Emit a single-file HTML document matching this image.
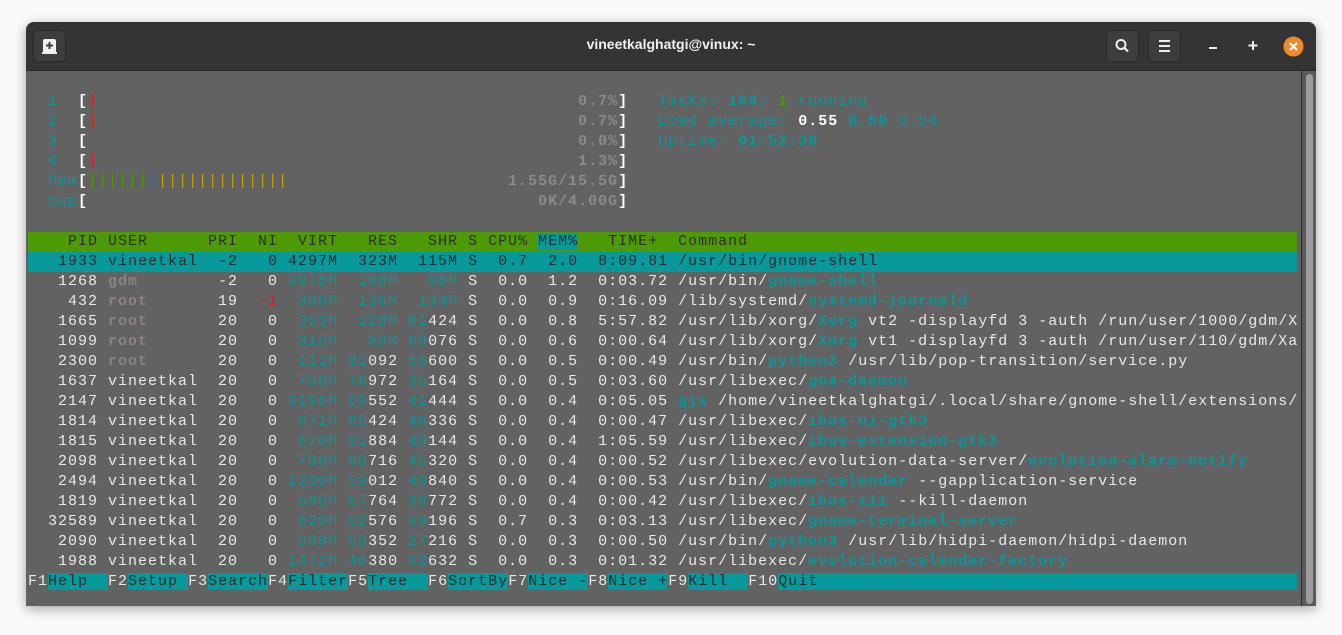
<!DOCTYPE html>
<html><head><meta charset="utf-8"><style>
html,body{margin:0;padding:0;width:1342px;height:635px;background:#fafafa;overflow:hidden;position:relative}
.win{position:absolute;left:26px;top:22px;width:1290px;height:584px;background:#626262;border-radius:8px 8px 0 0;box-shadow:0 3px 12px rgba(0,0,0,.35);overflow:hidden}
.tb{position:absolute;left:0;top:0;width:1290px;height:48px;background:#343434;border-bottom:1px solid #262626}
.title{position:absolute;left:0;width:100%;top:14px;text-align:center;color:#f0f0f0;font:bold 14px "Liberation Sans",sans-serif}
.btn{position:absolute;top:8px;width:33px;height:32px;background:#3d3d3d;border:1px solid #2a2a2a;border-radius:5px;box-sizing:border-box}
.term{position:absolute;left:2px;top:70px;width:1269px;height:500px;overflow:hidden;font:15px/20px "Liberation Mono",monospace;letter-spacing:1px;color:#e8e8e8;white-space:normal}
.term div{height:20px;white-space:pre}
.c{color:#06989a}.cb{color:#06989a;font-weight:bold}.u{color:#8a8280;font-weight:bold}.r{color:#e01b1b}
.w{color:#fff;font-weight:bold}.gr{color:#8e8886;font-weight:bold}.g{color:#4e9a06}.y{color:#c4a000}.bl{color:#3465a4}
.hdr{background:#4e9a06;color:#2e2e2e}.sel{background:#06989a;color:#2e2e2e}
.ft{background:#06989a;color:#2e2e2e}
</style></head><body>
<div class="win">
<div class="tb">
 <div class="btn" style="left:7px"><svg width="31" height="30" viewBox="0 0 31 30"><path d="M9 21V10a2 2 0 0 1 2-2h9a2 2 0 0 1 2 2v11z" fill="#eee"/><path d="M15.5 11v7M12 14.5h7" stroke="#3d3d3d" stroke-width="2"/><rect x="8" y="21" width="15" height="2" fill="#eee"/></svg></div>
 <div class="title">vineetkalghatgi@vinux: ~</div>
 <div class="btn" style="left:1080px"><svg width="31" height="30" viewBox="0 0 31 30"><circle cx="14" cy="13.5" r="4.5" fill="none" stroke="#eee" stroke-width="2"/><path d="M17.5 17l3.5 3.5" stroke="#eee" stroke-width="2.2"/></svg></div>
 <div class="btn" style="left:1122px"><svg width="31" height="30" viewBox="0 0 31 30"><path d="M10 10h11M10 15h11M10 20h11" stroke="#eee" stroke-width="2"/></svg></div>
 <svg style="position:absolute;left:1180px;top:14px" width="20" height="20"><path d="M3 12h8" stroke="#eee" stroke-width="2"/></svg>
 <svg style="position:absolute;left:1218px;top:14px" width="20" height="20"><path d="M9 5v9M4.5 9.5h9" stroke="#eee" stroke-width="2"/></svg>
 <svg style="position:absolute;left:1257px;top:14px" width="21" height="21"><circle cx="10.5" cy="10.5" r="10" fill="#f0892a"/><path d="M7 7l7 7M14 7l-7 7" stroke="#fff" stroke-width="2"/></svg>
</div>
<div style="position:absolute;left:1275px;top:49px;width:15px;height:535px;background:#5a5a5a;border-left:1px solid #2d2d2d"></div>
<div style="position:absolute;left:1280px;top:52px;width:7px;height:530px;background:#9c9c9c;border-radius:4px"></div>
<div class="term"><div>  <span class="c">1</span>  <span class="w">[</span><span class="r">|</span>                                                <span class="gr">0.7%</span><span class="w">]</span>   <span class="c">Tasks: </span><span class="cb">166</span><span class="c">; </span><span class="g" style="font-weight:bold">1</span><span class="c"> running</span></div><div>  <span class="c">2</span>  <span class="w">[</span><span class="r">|</span>                                                <span class="gr">0.7%</span><span class="w">]</span>   <span class="c">Load average: </span><span class="w">0.55 </span><span class="cb">0.50 </span><span class="c">0.54</span></div><div>  <span class="c">3</span>  <span class="w">[</span>                                                 <span class="gr">0.0%</span><span class="w">]</span>   <span class="c">Uptime: </span><span class="cb">01:52:30</span></div><div>  <span class="c">4</span>  <span class="w">[</span><span class="r">|</span>                                                <span class="gr">1.3%</span><span class="w">]</span></div><div>  <span class="c">Mem</span><span class="w">[</span><span class="g">||||||</span><span class="bl">|</span><span class="y">|||||||||||||</span>                      <span class="gr">1.55G/15.5G</span><span class="w">]</span></div><div>  <span class="c">Swp</span><span class="w">[</span>                                             <span class="gr">0K/4.00G</span><span class="w">]</span></div><div></div><div class="hdr">    PID USER      PRI  NI  VIRT   RES   SHR S CPU% <span class="sel">MEM%</span>   TIME+  Command                                                                                     </div><div class="sel">   1933 vineetkal  -2   0 4297M  323M  115M S  0.7  2.0  8:09.81 /usr/bin/gnome-shell                                                                     </div><div>   1268 <span class="u">gdm      </span>  -2   0 <span class="c">3978M  188M   98M</span> S  0.0  1.2  0:03.72 /usr/bin/<span class="cb">gnome-shell</span></div><div>    432 <span class="u">root     </span>  19  <span class="r">-1</span> <span class="c"> 309M  136M  134M</span> S  0.0  0.9  0:16.09 /lib/systemd/<span class="cb">systemd-journald</span></div><div>   1665 <span class="u">root     </span>  20   0 <span class="c"> 353M  128M </span><span class="c">81</span>424 S  0.0  0.8  5:57.82 /usr/lib/xorg/<span class="cb">Xorg</span> vt2 -displayfd 3 -auth /run/user/1000/gdm/X</div><div>   1099 <span class="u">root     </span>  20   0 <span class="c"> 315M   99M </span><span class="c">69</span>076 S  0.0  0.6  0:00.64 /usr/lib/xorg/<span class="cb">Xorg</span> vt1 -displayfd 3 -auth /run/user/110/gdm/Xa</div><div>   2300 <span class="u">root     </span>  20   0 <span class="c"> 111M </span><span class="c">81</span>092 <span class="c">56</span>600 S  0.0  0.5  0:00.49 /usr/bin/<span class="cb">python3</span> /usr/lib/pop-transition/service.py</div><div>   1637 vineetkal  20   0 <span class="c"> 750M </span><span class="c">76</span>972 <span class="c">35</span>164 S  0.0  0.5  0:03.60 /usr/libexec/<span class="cb">goa-daemon</span></div><div>   2147 vineetkal  20   0 <span class="c">3196M </span><span class="c">69</span>552 <span class="c">41</span>444 S  0.0  0.4  0:05.05 <span class="cb">gjs</span> /home/vineetkalghatgi/.local/share/gnome-shell/extensions/</div><div>   1814 vineetkal  20   0 <span class="c"> 671M </span><span class="c">65</span>424 <span class="c">46</span>336 S  0.0  0.4  0:00.47 /usr/libexec/<span class="cb">ibus-ui-gtk3</span></div><div>   1815 vineetkal  20   0 <span class="c"> 670M </span><span class="c">61</span>884 <span class="c">40</span>144 S  0.0  0.4  1:05.59 /usr/libexec/<span class="cb">ibus-extension-gtk3</span></div><div>   2098 vineetkal  20   0 <span class="c"> 700M </span><span class="c">60</span>716 <span class="c">45</span>320 S  0.0  0.4  0:00.52 /usr/libexec/evolution-data-server/<span class="cb">evolution-alarm-notify</span></div><div>   2494 vineetkal  20   0 <span class="c">1230M </span><span class="c">59</span>012 <span class="c">43</span>840 S  0.0  0.4  0:00.53 /usr/bin/<span class="cb">gnome-calendar</span> --gapplication-service</div><div>   1819 vineetkal  20   0 <span class="c"> 595M </span><span class="c">57</span>764 <span class="c">39</span>772 S  0.0  0.4  0:00.42 /usr/libexec/<span class="cb">ibus-x11</span> --kill-daemon</div><div>  32589 vineetkal  20   0 <span class="c"> 620M </span><span class="c">52</span>576 <span class="c">39</span>196 S  0.7  0.3  0:03.13 /usr/libexec/<span class="cb">gnome-terminal-server</span></div><div>   2090 vineetkal  20   0 <span class="c"> 509M </span><span class="c">50</span>352 <span class="c">27</span>216 S  0.0  0.3  0:00.50 /usr/bin/<span class="cb">python3</span> /usr/lib/hidpi-daemon/hidpi-daemon</div><div>   1988 vineetkal  20   0 <span class="c">1472M </span><span class="c">46</span>380 <span class="c">32</span>632 S  0.0  0.3  0:01.32 /usr/libexec/<span class="cb">evolution-calendar-factory</span></div><div>F1<span class="ft">Help  </span>F2<span class="ft">Setup </span>F3<span class="ft">Search</span>F4<span class="ft">Filter</span>F5<span class="ft">Tree  </span>F6<span class="ft">SortBy</span>F7<span class="ft">Nice -</span>F8<span class="ft">Nice +</span>F9<span class="ft">Kill  </span>F10<span class="ft">Quit                                                 </span></div></div>
</div>
</body></html>
